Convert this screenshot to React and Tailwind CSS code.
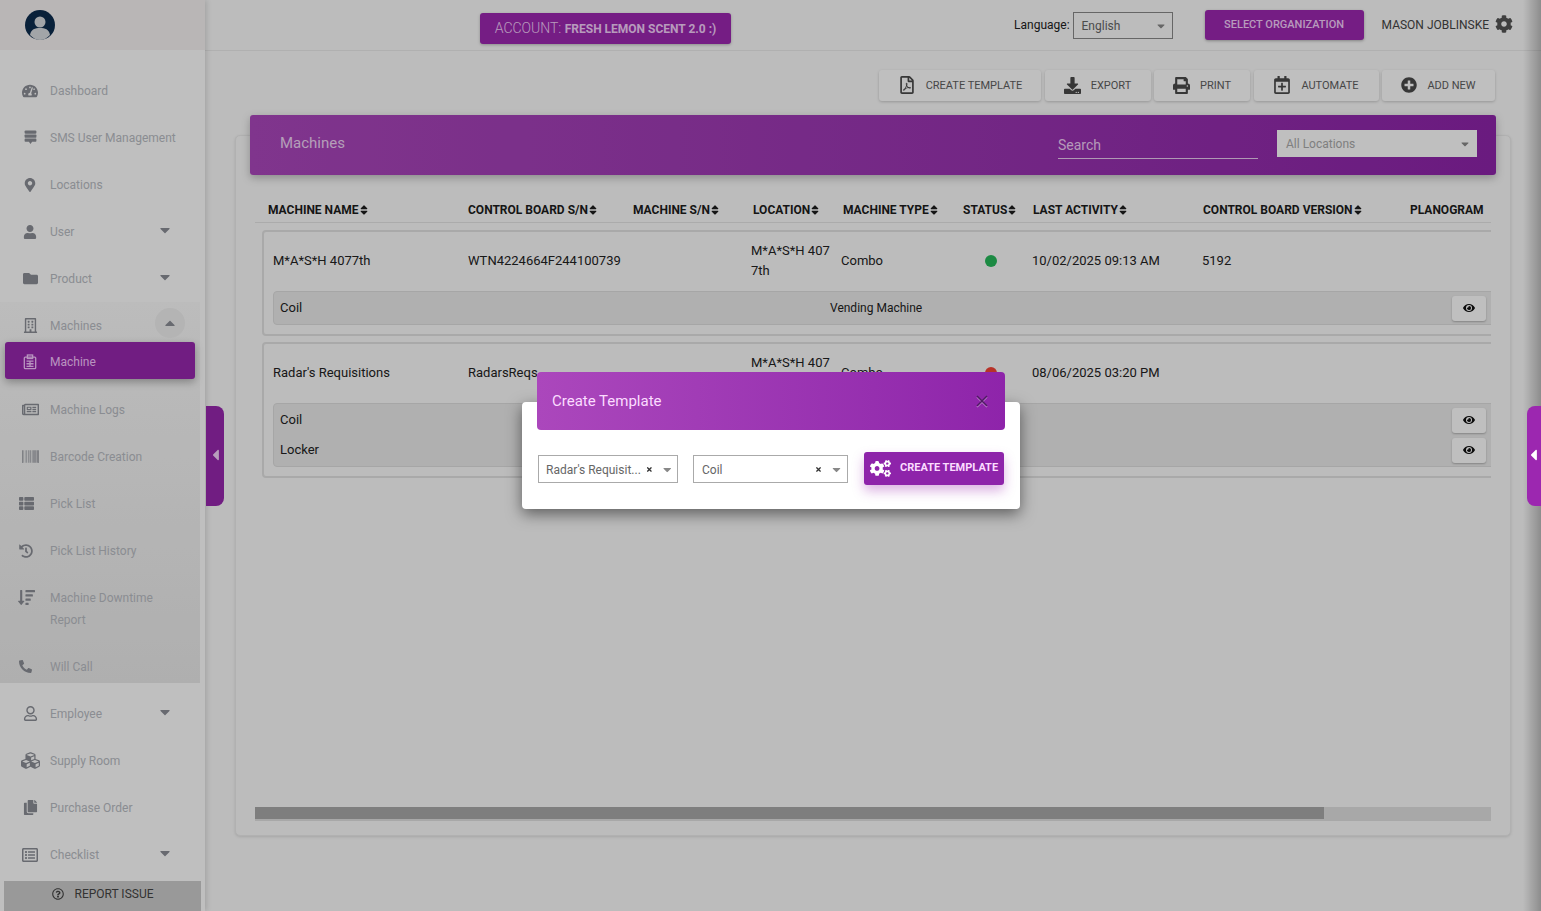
import React from "react";
import {
  FaTachometerAlt, FaMapMarkerAlt, FaUser, FaFolder, FaRegBuilding, FaRegNewspaper, FaBarcode, FaThList, FaHistory,
  FaSortAmountDown, FaPhone, FaRegUser, FaCubes, FaCopy, FaRegListAlt, FaRegQuestionCircle, FaCog, FaCogs, FaRegFilePdf,
  FaPrint, FaRegCalendarPlus, FaPlusCircle, FaEye, FaSort, FaCaretDown, FaCaretUp, FaCaretLeft, FaTimes, FaDownload,
} from "react-icons/fa";

const MachineIcon = (p) => (
  <svg viewBox="0 0 16 18" width="14" height="16" fill="none" stroke="currentColor" strokeWidth="1.5" {...p}>
    <rect x="1.5" y="3.5" width="13" height="13" rx="1" />
    <rect x="5" y="1" width="6" height="4" />
    <path d="M4 8h8M4 11h8M4 14h8M8 8v6" />
  </svg>
);

const SmsIcon = ({ size = 14 }) => (
  <svg viewBox="0 0 12 14" width={size} height={size} fill="currentColor">
    <rect x="0.5" y="0.5" width="11" height="3" rx="1" />
    <rect x="0.5" y="4.2" width="11" height="3" rx="0.6" />
    <path d="M1.2 8h9.6a.7.7 0 0 1 .7.7v1.6a.7.7 0 0 1-.7.7H7.5L6 13 4.5 11H1.2a.7.7 0 0 1-.7-.7V8.700a.7.7 0 0 1 .7-.7z" />
  </svg>
);

function Item({ icon: Icon, label, caret, size = 15, two, shift, flip, cls = "h-[47px]" }) {
  return (
    <div className={`flex pl-[18px] ${caret ? "pr-[32px]" : two ? "pr-[32px]" : "pr-[10px]"} ${two ? "items-start h-[69px] pt-[13px]" : `items-center ${cls}`}`}>
      <div className={`w-[32px] flex justify-center -ml-[4px] mr-[4px] text-[#8b8e96] ${shift ? "-translate-x-[4px]" : ""} ${flip ? "-scale-x-100" : ""} ${two ? "pt-[2px]" : ""}`}>
        <Icon size={size} />
      </div>
      <span className={`flex-1 text-[12px] leading-[22px] text-[#b9bcc3] ${two ? "" : "whitespace-nowrap"}`}>{label}</span>
      {caret && <FaCaretDown size={16} className="text-[#8b8e96] -mt-[3px]" />}
    </div>
  );
}

function ActionBtn({ icon: Icon, label, w, size = 17 }) {
  return (
    <button className={`${w} h-[31px] flex items-center justify-center gap-[10px] bg-white rounded-[3px] shadow-[0_1px_3px_rgba(0,0,0,0.2)] text-[11px] text-[#5e5e5e]`}>
      <Icon size={size} className="text-[#4a4a4a] -mt-[1px]" />
      <span className="mt-[1px]">{label}</span>
    </button>
  );
}

function Th({ w, label, sort = true }) {
  return (
    <div className={`${w} shrink-0 flex items-center text-[12px] font-bold text-[#1c1c1c] whitespace-nowrap`}>
      {label}
      {sort && <FaSort size={12} className="-ml-[1px]" />}
    </div>
  );
}

function EyeBtn() {
  return (
    <button className="w-[34px] h-[25px] flex items-center justify-center bg-white rounded-[3px] shadow-[0_1px_2px_rgba(0,0,0,0.25)] text-[#111]">
      <FaEye size={12} />
    </button>
  );
}

function SubRow({ name, type }) {
  return (
    <div className="flex items-center h-[30px] pl-[6px]">
      <span className="w-[550px] shrink-0 text-[13px] text-[#222]">{name}</span>
      <span className="w-[622px] shrink-0 text-[12px] text-[#222]">{type}</span>
      <EyeBtn />
    </div>
  );
}

function Card({ name, sn, dot, last, version, children }) {
  return (
    <div className="w-[1421px] ml-[7px] mb-[6px] bg-[#fbfbfb] rounded-[4px] border-2 border-[#e2e2e2] pb-[9px]">
      <div className="h-[58px] mb-[1px] flex items-center text-[13px] text-[#222]">
        <div className="w-[204px] pl-[9px] shrink-0">{name}</div>
        <div className="w-[283px] shrink-0">{sn}</div>
        <div className="w-[90px] shrink-0 leading-[20px]">M*A*S*H 407<br />7th</div>
        <div className="w-[120px] shrink-0">Combo</div>
        <div className="w-[71px] shrink-0 pl-[24px]">
          <div className={`w-[12px] h-[12px] rounded-full ${dot}`} />
        </div>
        <div className="w-[170px] shrink-0">{last}</div>
        <div>{version}</div>
      </div>
      <div className="mx-[9px] bg-[#ebebeb] rounded-[4px] border border-[#dedede] py-[1px]">{children}</div>
    </div>
  );
}

function ModalSelect({ w, value, pl = "pl-[7px]" }) {
  return (
    <div className={`${w} h-[28px] border border-[#aaa] flex items-center ${pl} pr-[4px] pt-[1px] text-[12px] text-[#666]`}>
      <span className="flex-1 whitespace-nowrap">{value}</span>
      <FaTimes size={7} className="text-[#333] mx-[5px]" />
      <FaCaretDown size={13} className="ml-[3px] text-[#888]" />
    </div>
  );
}

export default function App() {
  return (
    <div className="relative flex w-full h-[911px] overflow-hidden bg-[#fbfbfb] [font-family:Roboto,sans-serif]">
      {/* Sidebar */}
      <aside className="w-[205px] shrink-0 h-full bg-white flex flex-col shadow-[2px_0_5px_rgba(0,0,0,0.12)] relative z-[1]">
        <div className="h-[50px] shrink-0 bg-[#f7f3f3] pl-[25px] pt-[10px]">
          <svg width="30" height="30" viewBox="0 0 30 30">
            <circle cx="15" cy="15" r="15" fill="#0d2c4e" />
            <circle cx="15" cy="12" r="5.5" fill="#d9dde0" />
            <path d="M5 25c1-6 5-7 10-7s9 1 10 7c-3 3-6 5-10 5s-7-2-10-5z" fill="#d9dde0" />
          </svg>
        </div>
        <div className="pt-[17px] flex flex-col">
          <Item icon={FaTachometerAlt} label="Dashboard" size={16} />
          <Item icon={SmsIcon} label="SMS User Management" size={15} />
          <Item icon={FaMapMarkerAlt} label="Locations" size={14} />
          <Item icon={FaUser} label="User" caret size={14} />
          <Item icon={FaFolder} label="Product" caret size={15} />
          <div className="w-[200px] bg-gradient-to-b from-[#fbfbfb] to-[#eaeaea]">
            <div className="h-[40px] pt-[13px] flex items-start pl-[18px] pr-[15px] relative">
              <div className="w-[32px] flex justify-center -ml-[4px] mr-[4px] text-[#8b8e96]"><FaRegBuilding size={15} className="mt-[3px]" /></div>
              <span className="flex-1 text-[12px] leading-[22px] text-[#b9bcc3]">Machines</span>
              <span className="absolute right-[15px] top-[6px] w-[30px] h-[30px] rounded-full bg-[#f0f0f0] flex items-center justify-center text-[#8b8e96]">
                <FaCaretUp size={16} />
              </span>
            </div>
            <div className="ml-[5px] w-[190px] h-[37px] flex items-center pl-[13px] pt-[2px] bg-[#9727ae] rounded-[3px] shadow-[0_3px_8px_rgba(0,0,0,0.3)] text-[#f6c6ff]">
              <div className="w-[32px] flex justify-center -ml-[4px] mr-[4px]"><MachineIcon /></div>
              <span className="text-[12px]">Machine</span>
            </div>
            <div className="pt-[7px]">
              <Item icon={FaRegNewspaper} label="Machine Logs" size={17} />
              <Item icon={FaBarcode} label="Barcode Creation" size={17} />
              <Item icon={FaThList} label="Pick List" size={15} shift />
              <Item icon={FaHistory} label="Pick List History" size={14} shift />
              <Item icon={FaSortAmountDown} label="Machine Downtime Report" size={17} two shift />
              <Item icon={FaPhone} label="Will Call" size={13} shift flip cls="h-[40px] pt-[7px]" />
            </div>
          </div>
          <div className="mt-[7px]">
            <Item icon={FaRegUser} label="Employee" caret size={15} />
          </div>
          <Item icon={FaCubes} label="Supply Room" size={19} />
          <Item icon={FaCopy} label="Purchase Order" size={15} />
          <Item icon={FaRegListAlt} label="Checklist" caret size={16} />
        </div>
        <div className="mt-auto ml-[4px] w-[197px] h-[30px] pb-[4px] bg-[#cdcdcd] flex items-center justify-center gap-[11px] text-[12px] text-[#444]">
          <FaRegQuestionCircle size={12} />
          REPORT ISSUE
        </div>
      </aside>

      {/* Left collapse tab */}
      <div className="absolute left-[206px] top-[406px] w-[18px] h-[100px] rounded-r-[8px] bg-[#9727ae] flex items-center justify-start text-[#f6d5fb] z-[2]">
        <FaCaretLeft size={18} className="ml-[1px] -mt-[2px]" />
      </div>

      {/* Main */}
      <main className="flex-1 min-w-0 flex flex-col">
        <header className="h-[51px] shrink-0 border-b border-[#ebebeb] flex items-start pl-[275px] pr-[28px]">
          <div className="mt-[13px] w-[251px] h-[31px] rounded-[3px] bg-[#9c27b0] flex items-center justify-center text-[14px] text-[#f4cffb] font-light shadow-[0_1px_3px_rgba(0,0,0,0.25)] whitespace-nowrap">
            ACCOUNT:&nbsp;<b className="font-bold text-[12px]">FRESH LEMON SCENT 2.0 :)</b>
          </div>
          <span className="ml-auto mt-[16px] text-[12px] text-[#222]">Language:</span>
          <div className="ml-[3px] mt-[12px] w-[100px] h-[27px] border border-[#888] flex items-center justify-between pl-[8px] pr-[5px] text-[12px] text-[#666]">
            English
            <FaCaretDown size={12} className="text-[#888]" />
          </div>
          <div className="ml-[32px] mt-[10px] w-[159px] h-[30px] rounded-[3px] bg-[#9c27b0] flex items-center justify-center text-[11px] font-medium text-[#f4cffb] shadow-[0_1px_3px_rgba(0,0,0,0.3)]">
            SELECT ORGANIZATION
          </div>
          <span className="ml-[18px] mt-[16px] text-[12px] text-[#444]">MASON JOBLINSKE</span>
          <FaCog size={18} className="ml-[6px] mt-[15px] text-[#555]" />
        </header>

        <div className="mt-[19px] pr-[46px] flex justify-end gap-[3.5px]">
          <ActionBtn icon={FaRegFilePdf} label="CREATE TEMPLATE" w="w-[162px]" size={18} />
          <ActionBtn icon={FaDownload} label="EXPORT" w="w-[106px]" size={17} />
          <ActionBtn icon={FaPrint} label="PRINT" w="w-[96px]" size={17} />
          <ActionBtn icon={FaRegCalendarPlus} label="AUTOMATE" w="w-[125px]" size={18} />
          <ActionBtn icon={FaPlusCircle} label="ADD NEW" w="w-[113px]" size={16} />
        </div>

        <section className="mx-[30px] mt-[34px] h-[701px] bg-[#fbfbfb] rounded-[5px] border border-[#ececec] shadow-[0_1px_3px_rgba(0,0,0,0.12)] flex flex-col">
          <div className="mx-[14px] -mt-[21px] h-[60px] shrink-0 rounded-[3px] bg-gradient-to-r from-[#ab47bc] to-[#8e24aa] shadow-[0_3px_8px_rgba(0,0,0,0.25)] flex items-center pl-[30px] pr-[19px]">
            <span className="text-[15px] text-[#f0d4f6] -mt-[4px]">Machines</span>
            <div className="ml-auto w-[200px] h-[29px] border-b border-[#eacdf0] text-[14px] text-[#f0cdf6] flex items-end pb-[2px] -mt-[2px]">Search</div>
            <div className="ml-[19px] w-[200px] h-[27px] -mt-[3px] pt-[1px] bg-white flex items-center justify-between pl-[9px] pr-[6px] text-[12px] text-[#aaa]">
              All Locations
              <FaCaretDown size={12} className="text-[#888]" />
            </div>
          </div>

          <div className="mx-[19px] mt-[15px] overflow-hidden">
            <div className="w-[1428px]">
              <div className="flex items-center h-[33px] pt-[8px] pl-[13px] border-b border-[#e4e4e4]">
                <Th w="w-[200px]" label="MACHINE NAME" />
                <Th w="w-[165px]" label="CONTROL BOARD S/N" />
                <Th w="w-[120px]" label="MACHINE S/N" />
                <Th w="w-[90px]" label="LOCATION" />
                <Th w="w-[120px]" label="MACHINE TYPE" />
                <Th w="w-[70px]" label="STATUS" />
                <Th w="w-[170px]" label="LAST ACTIVITY" />
                <Th w="w-[207px]" label="CONTROL BOARD VERSION" />
                <Th w="w-[80px]" label="PLANOGRAM" sort={false} />
              </div>
              <div className="pt-[7px]">
                <Card name="M*A*S*H 4077th" sn="WTN4224664F244100739" dot="bg-[#26b85a]" last="10/02/2025 09:13 AM" version="5192">
                  <SubRow name="Coil" type="Vending Machine" />
                </Card>
                <Card name="Radar's Requisitions" sn="RadarsReqs" dot="bg-[#f44336]" last="08/06/2025 03:20 PM">
                  <SubRow name="Coil" />
                  <SubRow name="Locker" />
                </Card>
              </div>
            </div>
          </div>

          <div className="mx-[19px] mt-auto mb-[14px] h-[14px] bg-[#e1e1e1] shrink-0">
            <div className="w-[1069px] h-[12px] bg-[#a8a8a8]" />
          </div>
        </section>
      </main>

      {/* Right edge shadow */}
      <div className="absolute right-0 top-0 bottom-0 w-[18px] bg-gradient-to-r from-transparent to-black/25" />

      {/* Backdrop */}
      <div className="absolute inset-0 z-10 bg-black/25" />

      {/* Right tab */}
      <div className="absolute right-0 top-[406px] z-20 w-[14px] h-[100px] rounded-l-[8px] bg-[#9c27b0] flex items-center text-white">
        <FaCaretLeft size={18} className="-ml-[1px] -mt-[2px]" />
      </div>

      {/* Modal */}
      <div className="absolute left-[522px] top-[402px] z-20 w-[498px] h-[107px] bg-white rounded-[4px] shadow-[0_5px_15px_rgba(0,0,0,0.5)]">
        <div className="absolute left-[15px] -top-[30px] w-[468px] h-[58px] rounded-[4px] bg-gradient-to-r from-[#ab47bc] to-[#8e24aa] flex items-center justify-between pl-[15px] pr-[16px]">
          <span className="text-[15px] mt-[1px] text-[#fbdcff]">Create Template</span>
          <svg width="14" height="14" viewBox="0 0 14 14" fill="none" strokeWidth="1.5">
            <path d="M2 3l10 10M12 3L2 13" stroke="#ffffff" strokeOpacity="0.45" />
            <path d="M2 2l10 10M12 2L2 12" stroke="#4f1a63" />
          </svg>
        </div>
        <div className="pt-[53px] pl-[16px] flex items-start">
          <ModalSelect w="w-[140px]" value="Radar's Requisit..." />
          <div className="w-[15px]" />
          <ModalSelect w="w-[155px]" value="Coil" pl="pl-[8px]" />
          <button className="ml-[16px] -mt-[3px] w-[140px] h-[33px] rounded-[3px] bg-[#8e24aa] shadow-[0_6px_12px_rgba(156,39,176,0.35)] flex items-center pl-[6px] gap-[9px] text-[11px] font-bold text-[#fbdcff] whitespace-nowrap">
            <FaCogs size={21} className="text-white" />
            CREATE TEMPLATE
          </button>
        </div>
      </div>
    </div>
  );
}
